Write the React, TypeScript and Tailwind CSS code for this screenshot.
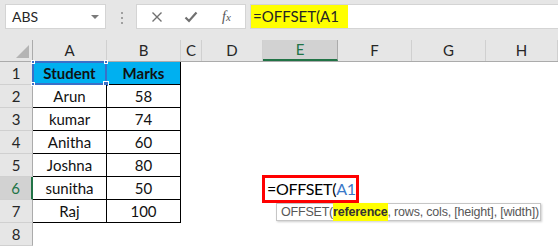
import React from "react";

const cols = [
  { key: "A", w: "w-[74px]" },
  { key: "B", w: "w-[74px]" },
  { key: "C", w: "w-[21px]" },
  { key: "D", w: "w-[61px]" },
  { key: "E", w: "w-[75px]" },
  { key: "F", w: "w-[74px]" },
  { key: "G", w: "w-[74px]" },
  { key: "H", w: "flex-1" },
];

const rows: [string, string][] = [
  ["Student", "Marks"],
  ["Arun", "58"],
  ["kumar", "74"],
  ["Anitha", "60"],
  ["Joshna", "80"],
  ["sunitha", "50"],
  ["Raj", "100"],
];

const Toolbar = () => (
  <div className="flex h-[40px] items-start bg-[#e6e6e6] pt-[4px]">
    <div className="ml-[5px] flex h-[25px] w-[101px] items-center justify-between border border-[#d4d4d4] bg-white pl-[6px] pr-[6px] text-[14px] text-[#262626]">
      <span>ABS</span>
      <span className="h-0 w-0 border-x-[4px] border-t-[4px] border-x-transparent border-t-[#7a7a7a]" />
    </div>
    <div className="ml-[15px] mt-[8px] flex flex-col gap-[3px]">
      <span className="h-[2px] w-[2px] bg-[#a0a0a0]" />
      <span className="h-[2px] w-[2px] bg-[#a0a0a0]" />
      <span className="h-[2px] w-[2px] bg-[#a0a0a0]" />
    </div>
    <div className="ml-[13px] flex h-[25px] w-[110px] items-center justify-around border border-[#d4d4d4] bg-white px-[4px]">
      <svg width="12" height="12" viewBox="0 0 12 12">
        <path d="M1.5 1.5l9 9M10.5 1.5l-9 9" stroke="#707070" strokeWidth="1.4" />
      </svg>
      <svg width="14" height="12" viewBox="0 0 14 12">
        <path d="M1.5 6.5l3.5 3.5 7.5-8.5" stroke="#707070" strokeWidth="2.2" fill="none" />
      </svg>
      <span className="ml-[4px] font-['Liberation_Serif',serif] text-[14px] italic text-[#555]">
        f<span className="text-[11px]">x</span>
      </span>
    </div>
    <div className="ml-[4px] flex h-[25px] flex-1 items-center border-y border-l border-[#d4d4d4] bg-white">
      <span className="flex h-full w-[97px] items-center bg-[#ffff00] pl-[2px] text-[15px] text-[#262626]">
        =OFFSET(A1
      </span>
    </div>
  </div>
);

const HeaderRow = () => (
  <div className="flex h-[22px] border-b border-[#ababab] bg-[#e6e6e6]">
    <div className="relative w-[33px] border-r border-[#ababab]">
      <span className="absolute bottom-[3px] right-[3px] h-0 w-0 border-b-[13px] border-l-[13px] border-b-[#b4b4b4] border-l-transparent" />
    </div>
    {cols.map((c) => (
      <div
        key={c.key}
        className={`${c.w} flex items-center justify-center text-[15px] ${
          c.key === "E"
            ? "border-b-2 border-r border-b-[#217346] border-r-[#ababab] bg-[#d2d2d2] text-[#217346]"
            : "border-r border-[#d0d0d0] text-[#262626]"
        }`}
      >
        {c.key}
      </div>
    ))}
  </div>
);

const Corner = ({ pos, big }: { pos: string; big?: boolean }) => (
  <span
    className={`absolute ${pos} ${big ? "h-[6px] w-[6px]" : "h-[4px] w-[4px]"} bg-[#3a70c8] border border-white`}
  />
);

const SheetRow = ({ n, data }: { n: number; data?: [string, string] }) => {
  const active = n === 6;
  const head = n === 1;
  return (
    <div className="flex h-[23px]">
      <div
        className={`flex w-[33px] items-center justify-center border-b border-[#d0d0d0] text-[15px] ${
          active
            ? "border-r-2 border-r-[#217346] bg-[#d2d2d2] text-[#217346]"
            : "border-r border-r-[#ababab] bg-[#e6e6e6] text-[#262626]"
        }`}
      >
        {n}
      </div>
      {data ? (
        <>
          <div
            className={`relative flex w-[74px] items-center justify-center border-b border-r border-black text-[15px] ${
              head ? "bg-[#00b0f0] font-bold" : "bg-white"
            }`}
          >
            {data[0]}
            {head && (
              <span className="absolute -left-px -top-px h-[24px] w-[75px] border-2 border-[#3a70c8]">
                <Corner pos="-left-[3px] -top-[3px]" />
                <Corner pos="-right-[3px] -top-[3px]" />
                <Corner pos="-left-[3px] -bottom-[3px]" />
                <Corner pos="-right-[4px] -bottom-[4px]" big />
              </span>
            )}
          </div>
          <div
            className={`flex w-[74px] items-center justify-center border-b border-r border-black text-[15px] ${
              head ? "bg-[#00b0f0] font-bold" : "bg-white"
            }`}
          >
            {data[1]}
          </div>
        </>
      ) : (
        <div className="w-[148px] bg-white" />
      )}
      <div className="flex-1 bg-white" />
    </div>
  );
};

export default function App() {
  return (
    <div className="relative h-[247px] w-[558px] overflow-hidden bg-white font-['Lato',sans-serif] text-[#111]">
      <Toolbar />
      <HeaderRow />
      {[1, 2, 3, 4, 5, 6, 7, 8].map((n) => (
        <SheetRow key={n} n={n} data={rows[n - 1]} />
      ))}
      <div className="absolute left-[262px] top-[175px] flex h-[28px] w-[97px] items-center whitespace-nowrap border-[3px] border-[#ff0000] bg-white pl-[2px] text-[16px] tracking-[-0.3px] text-black">
        =OFFSET(<span className="text-[#3a78c8]">A1</span>
        <span className="ml-[1px] h-[20px] w-px bg-black" />
      </div>
      <div className="absolute left-[276px] top-[203px] flex h-[18px] w-[265px] items-center whitespace-nowrap border border-[#c6c6c6] bg-white pl-[4px] font-['Liberation_Sans',sans-serif] text-[12.5px] tracking-[-0.2px] text-[#575757] shadow-[1px_1px_2px_rgba(0,0,0,0.2)]">
        OFFSET(<span className="bg-[#ffff00] font-bold text-[#333]">reference</span>, rows, cols, [height], [width])
      </div>
    </div>
  );
}
